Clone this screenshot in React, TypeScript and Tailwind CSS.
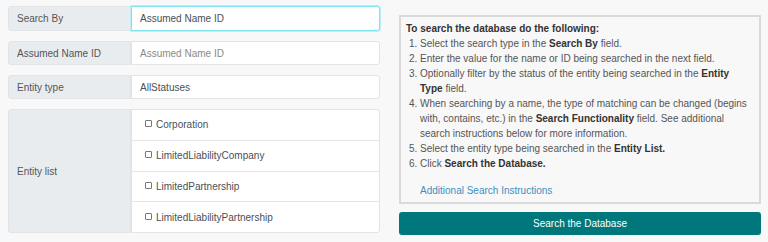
const entities = [
  "Corporation",
  "LimitedLiabilityCompany",
  "LimitedPartnership",
  "LimitedLiabilityPartnership",
];

function Row({ label, children, height, focus }: { label: string; children: React.ReactNode; height: string; focus?: boolean }) {
  return (
    <div className={`flex ${height}`}>
      <div className="w-[123px] shrink-0 flex items-center pl-2 bg-[#e9ecef] border border-[#e2e5e8] rounded-l-[3px] text-[#555]">
        {label}
      </div>
      <div
        className={`flex-1 flex items-center pl-[8px] bg-white rounded-r-[3px] ${
          focus
            ? "border border-[#80e4f0] shadow-[0_0_0_1px_#bdf0f6]"
            : "border border-[#e3e3e3]"
        }`}
      >
        {children}
      </div>
    </div>
  );
}

export default function App() {
  return (
    <div className="w-[768px] h-[242px] bg-[#f8f8f8] flex gap-[19px] pl-2 pt-[6px] font-['Liberation_Sans',Arial,sans-serif] text-[10px] leading-[15px]">
      {/* Search form */}
      <div className="w-[372px] flex flex-col gap-[10px]">
        <Row label="Search By" height="h-[25px]" focus>
          <span className="text-[#495057]">Assumed Name ID</span>
        </Row>
        <Row label="Assumed Name ID" height="h-[24px]">
          <span className="text-[#8a8a8a]">Assumed Name ID</span>
        </Row>
        <Row label="Entity type" height="h-[24px]">
          <span className="text-[#495057]">AllStatuses</span>
        </Row>

        {/* Entity list */}
        <div className="flex h-[124px]">
          <div className="w-[123px] shrink-0 flex items-center pl-2 bg-[#e9ecef] border border-[#e2e5e8] rounded-l-[3px] text-[#555]">
            Entity list
          </div>
          <div className="flex-1 flex flex-col bg-white border border-[#e3e3e3] rounded-r-[3px]">
            {entities.map((name, i) => (
              <div
                key={name}
                className={`flex-1 flex items-center pl-[13px] text-[#495057] ${
                  i < entities.length - 1 ? "border-b border-[#e6e6e6]" : ""
                }`}
              >
                <span className="w-[7px] h-[7px] border border-[#777] rounded-[1px] mr-[4px] -mt-[2px]" />
                {name}
              </div>
            ))}
          </div>
        </div>
      </div>

      {/* Instructions */}
      <div className="w-[362px] pt-[9px] flex flex-col gap-[8px]">
        <div className="h-[189px] border-2 border-[#dadada] px-[5px] pt-[4px] text-[#555]">
          <p className="font-bold text-[#333]">To search the database do the following:</p>
          <ol className="list-decimal pl-[14px]">
            <li>
              Select the search type in the <b className="text-[#333]">Search By</b> field.
            </li>
            <li>Enter the value for the name or ID being searched in the next field.</li>
            <li>
              Optionally filter by the status of the entity being searched in the{" "}
              <b className="text-[#333]">Entity Type</b> field.
            </li>
            <li>
              When searching by a name, the type of matching can be changed (begins with, contains,
              etc.) in the <b className="text-[#333]">Search Functionality</b> field. See additional
              search instructions below for more information.
            </li>
            <li>
              Select the entity type being searched in the <b className="text-[#333]">Entity List.</b>
            </li>
            <li>
              Click <b className="text-[#333]">Search the Database.</b>
            </li>
          </ol>
          <a className="block mt-[12px] pl-[14px] text-[#3a8fc2]">Additional Search Instructions</a>
        </div>
        <button className="h-[23px] rounded-[3px] bg-[#00777b] text-white text-[10px]">
          Search the Database
        </button>
      </div>
    </div>
  );
}
